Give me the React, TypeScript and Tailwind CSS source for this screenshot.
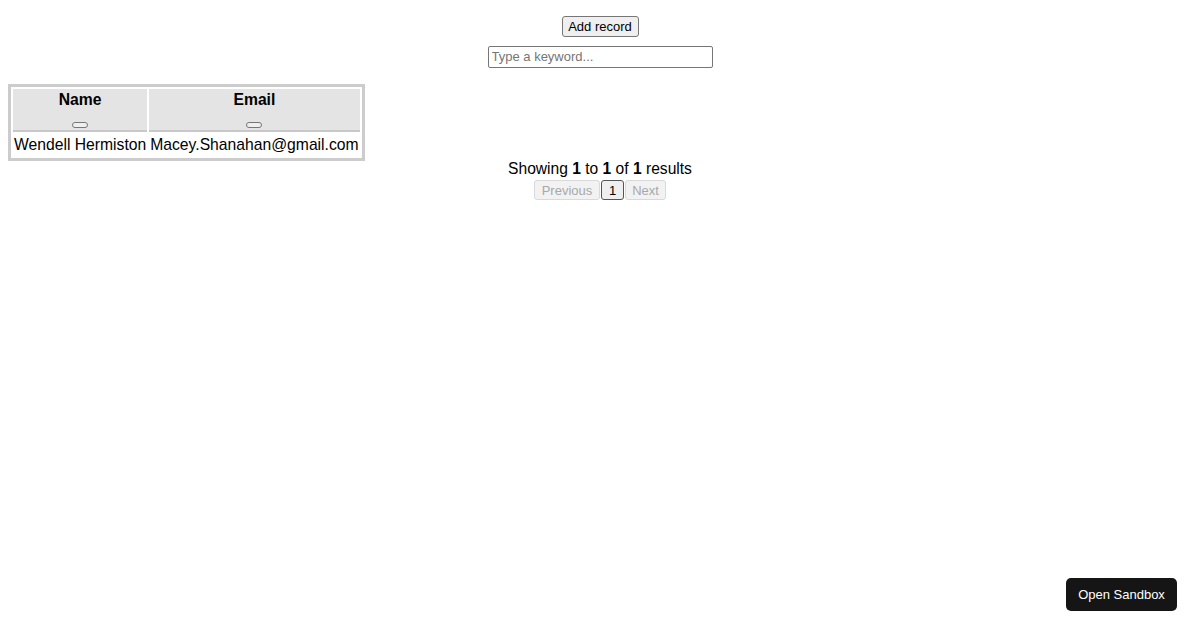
import { useState } from "react";

interface Row {
  name: string;
  email: string;
}

const rows: Row[] = [{ name: "Wendell Hermiston", email: "Macey.Shanahan@gmail.com" }];

function SortButton() {
  return (
    <button className="inline-block w-[16px] h-[6px] rounded-[3px] border border-[#767676] bg-[#efefef] align-top" />
  );
}

export default function App() {
  const [keyword, setKeyword] = useState("");
  const filtered = rows.filter(
    (r) => r.name.toLowerCase().includes(keyword.toLowerCase()) || r.email.toLowerCase().includes(keyword.toLowerCase())
  );

  return (
    <div className="relative min-h-[630px] bg-white p-2 text-black font-['Liberation_Sans',Arial,sans-serif]">
      {/* toolbar */}
      <div className="flex flex-col items-center pt-2">
        <button className="h-[21px] w-[77px] rounded-[3px] border border-[#767676] bg-[#efefef] text-[13px] leading-[19px] text-black">
          Add record
        </button>
        <input
          value={keyword}
          onChange={(e) => setKeyword(e.target.value)}
          placeholder="Type a keyword..."
          className="mt-[9px] w-[225px] h-[22px] px-[3px] pb-[2px] rounded-[2px] border border-[#767676] text-[13px] placeholder:text-[#757575] outline-none"
        />
      </div>

      {/* table */}
      <table className="mt-[16px] border-separate border-spacing-[2px] border-[3px] border-[#cccccc] text-[15.7px] leading-[18px]">
        <thead>
          <tr>
            {["Name", "Email"].map((h) => (
              <th key={h} className="bg-[#e4e4e4] px-[1px] pt-[2px] pb-[1px] font-bold text-center border-b-2 border-[#c8c8c8]">
                <div>{h}</div>
                <div className="pt-[13px] pb-[1px] leading-[6px]">
                  <SortButton />
                </div>
              </th>
            ))}
          </tr>
        </thead>
        <tbody>
          {filtered.map((r) => (
            <tr key={r.email}>
              <td className="px-[1px] pt-[2px] pb-[2px] whitespace-nowrap">{r.name}</td>
              <td className="px-[1px] pt-[2px] pb-[2px] whitespace-nowrap">{r.email}</td>
            </tr>
          ))}
        </tbody>
      </table>

      {/* pagination */}
      <div className="flex flex-col items-center -mt-[1px]">
        <div className="text-[15.6px] leading-[18px]">
          Showing <b>1</b> to <b>1</b> of <b>{filtered.length}</b> results
        </div>
        <div className="flex mt-[2px]">
          <button className="h-[20px] w-[66px] rounded-[3px] border border-[#d9d9d9] bg-[#f2f2f2] text-[13px] text-[#a8a8a8]">
            Previous
          </button>
          <button className="h-[20px] w-[23px] mx-[1px] rounded-[3px] border border-[#555555] bg-[#efefef] text-[13px] text-black">
            1
          </button>
          <button className="h-[20px] w-[41px] rounded-[3px] border border-[#d9d9d9] bg-[#f2f2f2] text-[13px] text-[#a8a8a8]">
            Next
          </button>
        </div>
      </div>

      <button className="absolute right-[23px] bottom-[19px] h-[33px] w-[111px] rounded-[5px] bg-[#151515] text-white text-[13px] font-['Liberation_Sans',Arial,sans-serif]">
        Open Sandbox
      </button>
    </div>
  );
}
